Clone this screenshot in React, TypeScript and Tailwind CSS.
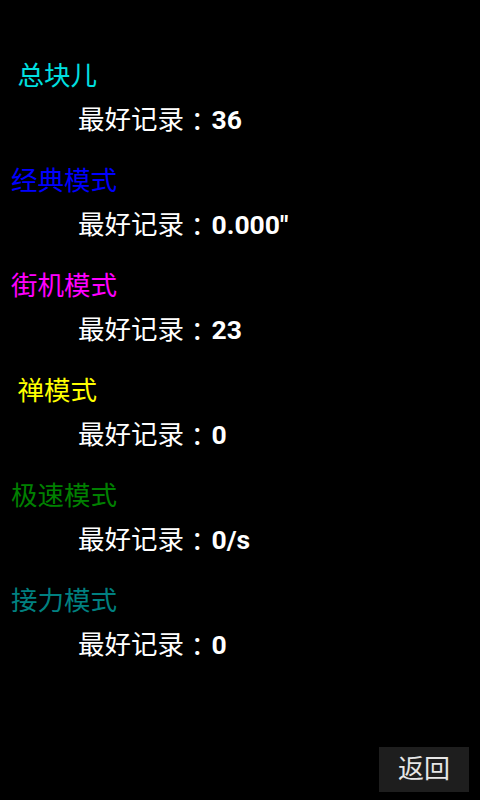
const modes = [
  { name: ' 总块儿', color: 'text-[#00e0e0]', best: '36' },
  { name: '经典模式', color: 'text-[#0000ff]', best: '0.000″' },
  { name: '街机模式', color: 'text-[#ff00ff]', best: '23' },
  { name: ' 禅模式', color: 'text-[#ffff00]', best: '0' },
  { name: '极速模式', color: 'text-[#008000]', best: '0/s' },
  { name: '接力模式', color: 'text-[#008080]', best: '0' },
];

export default function App() {
  return (
    <div
      className="w-[480px] h-[800px] bg-black flex flex-col overflow-hidden"
      style={{ fontFamily: "Roboto, 'Noto Sans CJK SC', sans-serif" }}
    >
      <div className="flex-1 flex flex-col pt-[58px]">
        {modes.map((m) => (
          <div key={m.name} className="flex flex-col h-[105px]">
            <div className={`h-[36px] flex items-center pl-[11px] text-[26.5px] whitespace-pre ${m.color}`}>
              {m.name}
            </div>
            <div className="h-[36px] mt-[8px] flex items-center pl-[78px] text-[26.5px] text-white">
              <span>最好记录</span>
              <span className="font-['Noto_Sans_CJK_TC'] pr-px">：</span>
              <span className="font-bold">{m.best}</span>
            </div>
          </div>
        ))}
      </div>
      <div className="flex justify-end pr-[11px] pb-[8px]">
        <button className="w-[90px] h-[45px] bg-[#1e1e1e] text-[#e6e6e6] text-[26px] flex items-center justify-center">
          返回
        </button>
      </div>
    </div>
  );
}
